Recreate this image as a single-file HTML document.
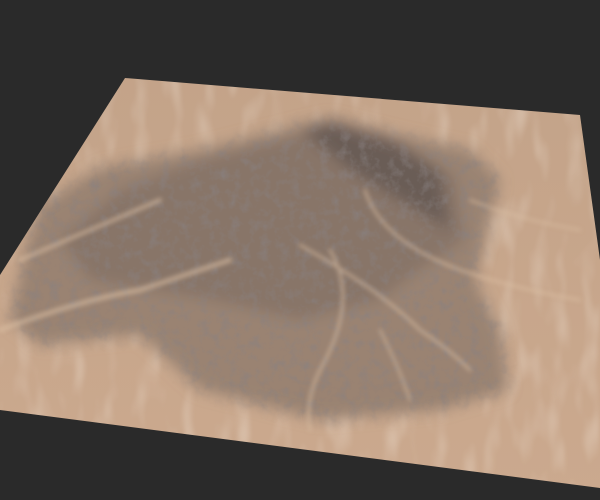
<!DOCTYPE html>
<html><head><style>html,body{margin:0;padding:0;background:#2a2a2a;width:600px;height:500px;overflow:hidden}</style></head>
<body>
<svg width="600" height="500" viewBox="0 0 600 500" xmlns="http://www.w3.org/2000/svg">
<defs>
<clipPath id="t"><polygon points="125,78 580,115 600,260 600,488 0,410 0,275"/></clipPath>
<filter id="b" x="-20%" y="-20%" width="140%" height="140%"><feGaussianBlur stdDeviation="7"/></filter>
<filter id="b2" x="-20%" y="-20%" width="140%" height="140%"><feGaussianBlur stdDeviation="2.5"/></filter>
<filter id="n" x="0" y="0" width="100%" height="100%">
<feTurbulence type="fractalNoise" baseFrequency="0.06 0.02" numOctaves="2" seed="4"/>
<feColorMatrix values="0 0 0 0 0.93  0 0 0 0 0.85  0 0 0 0 0.76  0 0 0 -2.5 1.3"/>
<feGaussianBlur stdDeviation="1.5"/>
</filter>
<filter id="n2" x="0" y="0" width="100%" height="100%">
<feTurbulence type="fractalNoise" baseFrequency="0.1" numOctaves="4" seed="9"/>
<feColorMatrix values="0 0 0 0 0.25  0 0 0 0 0.22  0 0 0 0 0.22  0 0 0 -2 1.1"/>
</filter>
<mask id="m"><polygon fill="#fff" filter="url(#b)" points="40,205 100,168 200,150 300,125 330,118 400,135 470,150 500,180 475,280 500,330 508,390 440,410 320,420 200,390 140,335 40,345 10,320 25,250"/></mask>
<linearGradient id="sand" x1="0" y1="0" x2="0" y2="1">
<stop offset="0" stop-color="#c2a288"/><stop offset="1" stop-color="#cba98e"/></linearGradient>
</defs>
<g clip-path="url(#t)">
<rect width="600" height="500" fill="url(#sand)"/>
<rect width="600" height="500" filter="url(#n)" opacity="0.3"/>
<g filter="url(#b)">
<polygon fill="#9a8372" points="40,205 100,168 200,150 300,125 330,118 400,135 470,150 500,180 475,280 500,330 508,390 440,410 320,420 200,390 140,335 40,345 10,320 25,250"/>
<polygon fill="#806f64" opacity="0.7" points="120,190 200,160 300,135 330,125 400,150 455,175 465,240 420,270 380,300 300,320 210,300 150,290 90,280 60,240"/>
<polygon fill="#5f5350" opacity="0.7" points="300,128 335,122 395,140 440,170 450,230 400,200 350,170"/>
</g>
<rect width="600" height="500" filter="url(#n2)" mask="url(#m)" opacity="0.7"/>
<g fill="none" stroke="#dcc0a4" stroke-linecap="round" filter="url(#b2)" opacity="0.6">
<path d="M20,260 Q90,230 160,200" stroke-width="4"/>
<path d="M0,330 Q80,300 140,290 Q200,270 230,260" stroke-width="5"/>
<path d="M300,245 Q380,290 420,330 Q450,350 470,370" stroke-width="3"/>
<path d="M330,250 Q360,300 320,370 Q305,400 310,430" stroke-width="3"/>
<path d="M365,190 Q380,240 460,270 Q520,290 580,300" stroke-width="3"/>
<path d="M380,330 Q400,370 410,400" stroke-width="2.5"/>
<path d="M470,200 Q520,220 580,230" stroke-width="2.5"/>
</g>
</g>
</svg>
</body></html>
